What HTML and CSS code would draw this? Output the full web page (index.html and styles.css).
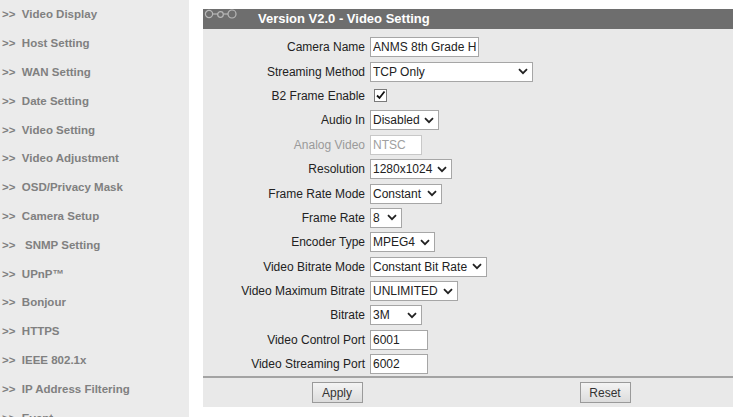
FILE: index.html
```html
<!DOCTYPE html>
<html>
<head>
<meta charset="utf-8">
<title>Video Setting</title>
<link rel="stylesheet" href="styles.css">
</head>
<body>
<nav class="sidebar">
  <a class="nav-item">&gt;&gt;&nbsp; Video Display</a>
  <a class="nav-item">&gt;&gt;&nbsp; Host Setting</a>
  <a class="nav-item">&gt;&gt;&nbsp; WAN Setting</a>
  <a class="nav-item">&gt;&gt;&nbsp; Date Setting</a>
  <a class="nav-item">&gt;&gt;&nbsp; Video Setting</a>
  <a class="nav-item">&gt;&gt;&nbsp; Video Adjustment</a>
  <a class="nav-item">&gt;&gt;&nbsp; OSD/Privacy Mask</a>
  <a class="nav-item">&gt;&gt;&nbsp; Camera Setup</a>
  <a class="nav-item">&gt;&gt;&nbsp;&nbsp; SNMP Setting</a>
  <a class="nav-item">&gt;&gt;&nbsp; UPnP™</a>
  <a class="nav-item">&gt;&gt;&nbsp; Bonjour</a>
  <a class="nav-item">&gt;&gt;&nbsp; HTTPS</a>
  <a class="nav-item">&gt;&gt;&nbsp; IEEE 802.1x</a>
  <a class="nav-item">&gt;&gt;&nbsp; IP Address Filtering</a>
  <a class="nav-item">&gt;&gt;&nbsp; Event</a>
</nav>
<main class="main">
  <section class="panel">
    <header class="panel-head">
      <svg class="head-icon" width="36" height="12" viewBox="0 0 36 12">
        <line x1="9" y1="5" x2="14" y2="5" stroke="#b8b8b8" stroke-width="1.2"/>
        <line x1="19.5" y1="5" x2="24" y2="5" stroke="#b8b8b8" stroke-width="1.2"/>
        <circle cx="5" cy="5" r="3.6" fill="none" stroke="#b8b8b8" stroke-width="1.2"/>
        <circle cx="16.5" cy="5.5" r="2.8" fill="none" stroke="#b8b8b8" stroke-width="1.2"/>
        <circle cx="28" cy="5" r="4" fill="none" stroke="#b8b8b8" stroke-width="1.2"/>
      </svg>
      <h1 class="panel-title">Version V2.0 - Video Setting</h1>
    </header>
    <div class="form">
      <label class="lbl">Camera Name</label>
      <div class="fld"><input class="txt w-name" type="text" value="ANMS 8th Grade Hall"></div>

      <label class="lbl">Streaming Method</label>
      <div class="fld"><select class="sel w-stream"><option>TCP Only</option></select></div>

      <label class="lbl">B2 Frame Enable</label>
      <div class="fld"><input class="chk" type="checkbox" checked></div>

      <label class="lbl">Audio In</label>
      <div class="fld"><select class="sel w-audio"><option>Disabled</option></select></div>

      <label class="lbl disabled">Analog Video</label>
      <div class="fld"><input class="txt w-analog" type="text" value="NTSC" disabled></div>

      <label class="lbl">Resolution</label>
      <div class="fld"><select class="sel w-res"><option>1280x1024</option></select></div>

      <label class="lbl">Frame Rate Mode</label>
      <div class="fld"><select class="sel w-frmode"><option>Constant</option></select></div>

      <label class="lbl">Frame Rate</label>
      <div class="fld"><select class="sel w-fr"><option>8</option></select></div>

      <label class="lbl">Encoder Type</label>
      <div class="fld"><select class="sel w-enc"><option>MPEG4</option></select></div>

      <label class="lbl">Video Bitrate Mode</label>
      <div class="fld"><select class="sel w-brmode"><option>Constant Bit Rate</option></select></div>

      <label class="lbl">Video Maximum Bitrate</label>
      <div class="fld"><select class="sel w-max"><option>UNLIMITED</option></select></div>

      <label class="lbl">Bitrate</label>
      <div class="fld"><select class="sel w-br"><option>3M</option></select></div>

      <label class="lbl">Video Control Port</label>
      <div class="fld"><input class="txt w-port" type="text" value="6001"></div>

      <label class="lbl">Video Streaming Port</label>
      <div class="fld"><input class="txt w-port" type="text" value="6002"></div>
    </div>
    <div class="actions">
      <div class="act-cell"><button class="btn" type="button">Apply</button></div>
      <div class="act-cell"><button class="btn" type="button">Reset</button></div>
    </div>
  </section>
</main>
</body>
</html>
```

FILE: styles.css
```css
html, body {
  margin: 0;
  padding: 0;
  height: 417px;
  overflow: hidden;
  background: #ffffff;
  font-family: "Liberation Sans", Arial, sans-serif;
}

body {
  display: flex;
  align-items: stretch;
}

.sidebar {
  flex: none;
  width: 189px;
  height: 417px;
  background: #ebebeb;
  display: flex;
  flex-direction: column;
  box-sizing: border-box;
}

.nav-item {
  flex: none;
  height: 28.8px;
  display: flex;
  align-items: center;
  padding-left: 2px;
  font-size: 11.5px;
  font-weight: bold;
  color: #808080;
  white-space: nowrap;
}

.main {
  flex: none;
  margin-left: 14px;
  padding-top: 9px;
}

.panel {
  width: 536px;
  background: #e9e9e9;
}

.panel-head {
  height: 20px;
  background: #6e6e6e;
  display: flex;
  align-items: center;
  position: relative;
}

.head-icon {
  position: absolute;
  left: 1px;
  top: 0;
}

.panel-title {
  margin: 0 0 0 55px;
  font-size: 13px;
  font-weight: bold;
  color: #ffffff;
  line-height: 20px;
}

.form {
  display: grid;
  grid-template-columns: 162px 1fr;
  column-gap: 5px;
  grid-auto-rows: 24.4px;
  padding-top: 6px;
  font-size: 12px;
}

.lbl {
  display: flex;
  align-items: center;
  justify-content: flex-end;
  color: #222222;
  white-space: nowrap;
}

.lbl.disabled {
  color: #9a9a9a;
}

.fld {
  display: flex;
  align-items: center;
}

.txt, .sel {
  box-sizing: border-box;
  height: 20px;
  margin: 0;
  border: 1px solid #a6a6a6;
  border-radius: 0;
  background-color: #ffffff;
  font-family: "Liberation Sans", Arial, sans-serif;
  font-size: 12px;
  color: #222222;
  padding: 0 2px;
  outline: none;
}

.txt:disabled {
  color: #a0a0a0;
  border-color: #c8c8c8;
  background: #ffffff;
}

.sel {
  -webkit-appearance: none;
  appearance: none;
  padding-right: 18px;
  background-image: url("data:image/svg+xml;utf8,<svg xmlns='http://www.w3.org/2000/svg' width='10' height='7' viewBox='0 0 10 7'><path d='M1 1.2 L5 5.2 L9 1.2' fill='none' stroke='%23222' stroke-width='1.8'/></svg>");
  background-repeat: no-repeat;
  background-position: right 4px center;
}

.chk {
  -webkit-appearance: none;
  appearance: none;
  box-sizing: border-box;
  width: 13px;
  height: 13px;
  margin: 0 0 0 4px;
  border: 1px solid #7a7a7a;
  background-color: #ffffff;
  background-image: url("data:image/svg+xml;utf8,<svg xmlns='http://www.w3.org/2000/svg' width='11' height='11' viewBox='0 0 11 11'><path d='M2 5.5 L4.5 8 L9.5 1.5' fill='none' stroke='%23111' stroke-width='1.8'/></svg>");
  background-repeat: no-repeat;
  background-position: center;
}

.w-name { width: 109px; }
.w-stream { width: 163px; }
.w-audio { width: 69px; }
.w-analog { width: 52px; }
.w-res { width: 82px; }
.w-frmode { width: 72px; }
.w-fr { width: 32px; }
.w-enc { width: 65px; }
.w-brmode { width: 117px; }
.w-max { width: 88px; }
.w-br { width: 52px; }
.w-port { width: 58px; }

.actions {
  display: grid;
  grid-template-columns: 1fr 1fr;
  border-top: 2px solid #a3a3a3;
  height: 29px;
}

.act-cell {
  display: flex;
  align-items: center;
  justify-content: center;
}

.btn {
  box-sizing: border-box;
  width: 51px;
  height: 21px;
  margin: 0;
  padding: 0;
  border: 1px solid #9a9a9a;
  border-radius: 0;
  background: linear-gradient(#f4f4f4, #dcdcdc);
  font-family: "Liberation Sans", Arial, sans-serif;
  font-size: 12px;
  color: #333333;
}
```
